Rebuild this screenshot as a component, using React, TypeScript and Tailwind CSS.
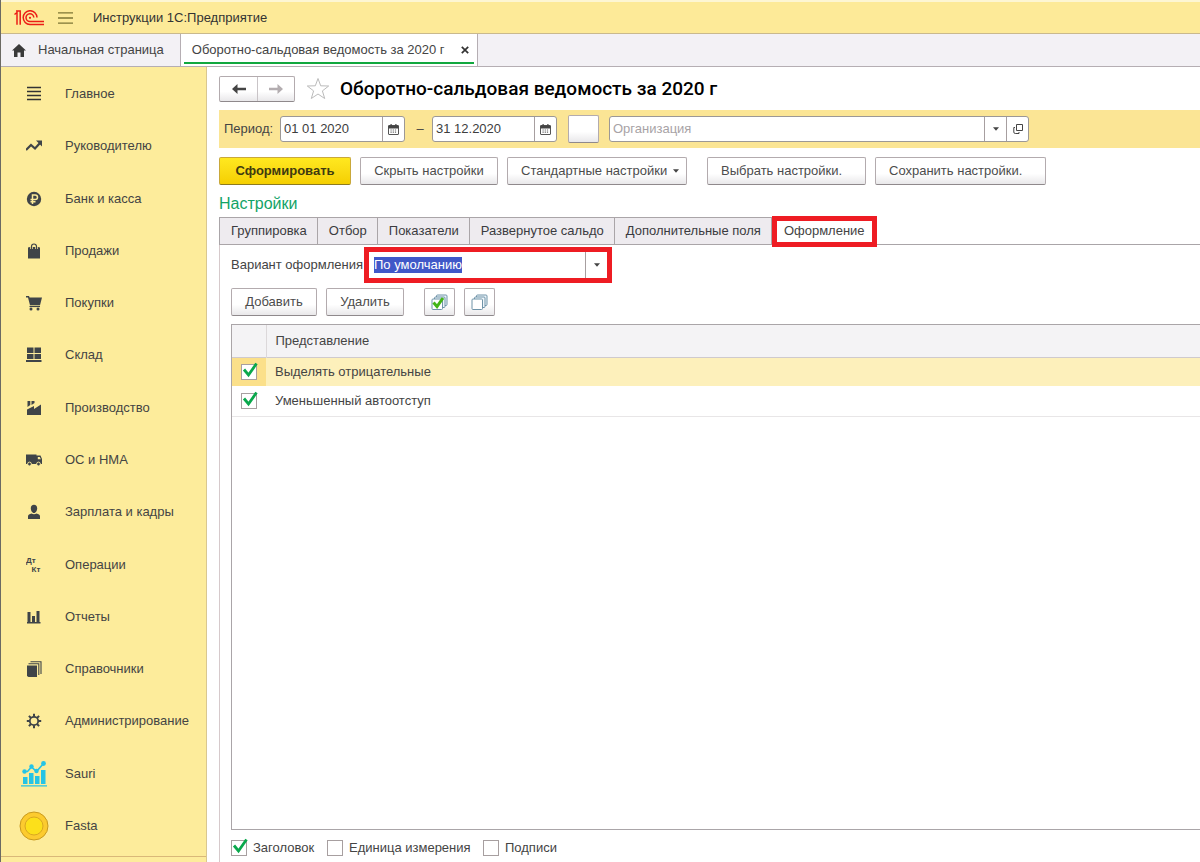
import { useEffect, useRef, type ReactNode } from "react";

const ink = "#3f4448";

const menu: { label: string; icon: ReactNode }[] = [
  {
    label: "Главное",
    icon: <path d="M1 1.5h14M1 5.5h14M1 9.5h14M1 13.5h14" stroke="#333" strokeWidth="1.6" fill="none" />,
  },
  {
    label: "Руководителю",
    icon: (
      <>
        <path d="M0 12l5-5 4 3.5 5-5.5" stroke={ink} strokeWidth="2.2" fill="none" />
        <path d="M10 2.500h6v6z" fill={ink} />
      </>
    ),
  },
  {
    label: "Банк и касса",
    icon: (
      <>
        <circle cx="8" cy="8" r="7.2" fill={ink} />
        <path d="M6.5 13V4h2.7a2.2 2.2 0 010 4.6H4.5M4.5 10.8h5" stroke="#fdec9b" strokeWidth="1.5" fill="none" />
      </>
    ),
  },
  {
    label: "Продажи",
    icon: (
      <>
        <path d="M2 4.500l2-.5h8l2 .5v11H2z" fill={ink} />
        <path d="M5.500 6V3.500a2.500 2.500 0 015 0V6" stroke="#fdec9b" strokeWidth="2.6" fill="none" />
        <path d="M5.500 6.500v-3a2.500 2.500 0 015 0v3" stroke={ink} strokeWidth="1.2" fill="none" />
      </>
    ),
  },
  {
    label: "Покупки",
    icon: (
      <>
        <path d="M0 1h3l.6 1.500H16l-2 7.800H4L2 2.500H0z" fill={ink} />
        <path d="M3.5 11.500H14" stroke={ink} strokeWidth="1.2" />
        <circle cx="5" cy="14" r="1.5" fill={ink} />
        <circle cx="12" cy="14" r="1.5" fill={ink} />
      </>
    ),
  },
  {
    label: "Склад",
    icon: <path d="M1 .5h6.5V6H1zM8.500 .5H15V6H8.500zM1 7h6.500v5H1zM8.500 7H15v5H8.500zM0 13h15.500v2H0z" fill={ink} />,
  },
  {
    label: "Производство",
    icon: <path d="M1 15V9.500L8 6v3l7-4.500V15zM1.500 1h2.800v4L1.500 7zM5.500 1h3v2l-3 2z" fill={ink} />,
  },
  {
    label: "ОС и НМА",
    icon: (
      <>
        <path d="M0 2.500h10.500V12H0zM10 3.500h4.500L16 7v5h-6z" fill={ink} />
        <path d="M11.800 5h2l1 2.200h-3z" fill="#fdec9b" />
        <circle cx="3.5" cy="12" r="1.900" fill={ink} stroke="#fdec9b" strokeWidth=".9" />
        <circle cx="12.500" cy="12" r="1.900" fill={ink} stroke="#fdec9b" strokeWidth=".9" />
      </>
    ),
  },
  {
    label: "Зарплата и кадры",
    icon: (
      <path
        d="M8 .8c2 0 3.200 1.400 3.200 3.400S9.900 9 8 9 4.800 6.200 4.800 4.200 6 .8 8 .8zM2 15v-2.800C2 10.500 3.500 10 5.500 9.500c1.500 1 3.500 1 5 0 2 .5 3.500 1 3.500 2.700V15z"
        fill={ink}
      />
    ),
  },
  {
    label: "Операции",
    icon: (
      <g fill={ink} fontFamily="Liberation Sans, sans-serif" fontWeight="bold" fontSize="8">
        <text x="0" y="6">Дт</text>
        <text x="5.500" y="15">Кт</text>
      </g>
    ),
  },
  {
    label: "Отчеты",
    icon: <path d="M1.500 3h3v10h-3zM6 7h3v6H6zM10.500 2h3v11h-3zM1 13h13.500v1.500H1z" fill={ink} />,
  },
  {
    label: "Справочники",
    icon: (
      <>
        <path d="M1 4.500h10V16H2.500L1 15z" fill={ink} />
        <path d="M2.500 2.800h10.300V14M4.500 .8H15V13" stroke={ink} strokeWidth="1.1" fill="none" />
      </>
    ),
  },
  {
    label: "Администрирование",
    icon: (
      <>
        <circle cx="8" cy="8" r="4.2" stroke={ink} strokeWidth="1.8" fill="none" />
        <path
          d="M8 .8v3M8 12.200v3M.8 8h3M12.200 8h3M2.900 2.900L5 5M11 11l2.100 2.100M2.900 13.100L5 11M11 5l2.100-2.100"
          stroke={ink}
          strokeWidth="2"
        />
      </>
    ),
  },
];

const plainButton =
  "h-7 rounded-xs border border-[#b3abae] border-b-[#8f898c] bg-linear-to-b from-white from-60% to-[#e9e8ea] text-center text-[#4c4c4c] whitespace-nowrap";
const fieldBox = "flex h-[26px] rounded-[3px] border border-[#9c9896] bg-white";
const textInput = "min-w-0 px-[3px] text-[#3d3d3d] outline-none placeholder:text-[#a8a3a6]";

function Logo() {
  return (
    <svg viewBox="0 0 30 16" className="h-4 w-[30px]" fill="none" stroke="#ec1c16" strokeWidth="1.5" aria-label="1С">
      <path d="M.5 4.500L3 2.500v12.300M2 1h4.200v13.800" />
      <path d="M23 7.500A6.900 6.900 0 1016 14.500h14" />
      <path d="M19.800 7.500A3.900 3.900 0 1016 11.600h14" />
      <circle cx="16" cy="7.800" r="1.100" fill="#ec1c16" stroke="none" />
    </svg>
  );
}

function Caret() {
  return (
    <svg viewBox="0 0 6 4" className="h-1 w-1.5" aria-hidden="true">
      <path d="M0 .3h6L3 3.700z" fill="#444" />
    </svg>
  );
}

function CalendarIcon() {
  return (
    <svg viewBox="0 0 11 11" className="size-[11px]" aria-hidden="true">
      <path d="M1 1.500h9q.5 0 .5.500v8q0 .5-.5.500H1q-.5 0-.5-.5V2q0-.5.500-.5z" fill="#fff" stroke="#555" />
      <path d="M.5 1.500h10v3H.5zM2.500 0h1.200v2H2.500zM7.300 0h1.200v2H7.300z" fill="#444" />
      <path d="M2.500 6h6.500M2.500 8.200h6.500" stroke="#666" strokeWidth="1.2" strokeDasharray="1.2 1" />
    </svg>
  );
}

function Arrow({ color, flip }: { color: string; flip?: boolean }) {
  return (
    <svg viewBox="0 0 14 10" className={flip ? "h-2.5 w-3.5 -scale-x-100" : "h-2.5 w-3.5"} aria-hidden="true">
      <path d="M0 5l5.500-5v3.700H14v2.600H5.500V10z" fill={color} />
    </svg>
  );
}

function Stack({ checked }: { checked?: boolean }) {
  return (
    <svg viewBox="0 0 17 17" className="size-[17px]" aria-hidden="true">
      <g fill="#eef5fa" stroke="#6f93a8">
        <rect x="5.5" y="1" width="10.5" height="10.5" rx="1" />
        <rect x="3.5" y="3" width="10.5" height="10.5" rx="1" />
        <rect x="1" y="5" width="10.5" height="10.5" rx="1" fill="#fff" />
      </g>
      {checked && <path d="M2.500 8.500l3.500 4L12 4" fill="none" stroke="#43b516" strokeWidth="3" />}
    </svg>
  );
}

function Check({ id, label, on }: { id: string; label?: string; on?: boolean }) {
  return (
    <span className="inline-grid size-4 shrink-0 align-middle">
      <input
        id={id}
        type="checkbox"
        defaultChecked={on}
        aria-label={label}
        className="peer col-start-1 row-start-1 size-4 appearance-none border border-[#a79fa0] bg-white"
      />
      <svg
        viewBox="0 0 16 16"
        className="pointer-events-none invisible col-start-1 row-start-1 size-4 overflow-visible peer-checked:visible"
        aria-hidden="true"
      >
        <path d="M3 5.500L7.500 11l8-11.500" fill="none" stroke="#0aa84c" strokeWidth="2.8" />
      </svg>
    </span>
  );
}

function DateField({ label, value }: { label: string; value: string }) {
  return (
    <div className={fieldBox}>
      <input type="text" aria-label={label} defaultValue={value} className={`${textInput} w-[101px]`} />
      <button type="button" aria-label="Выбрать дату" className="flex w-[22px] items-center justify-center border-l border-[#a79fa0]">
        <CalendarIcon />
      </button>
    </div>
  );
}

const tabs = ["Группировка", "Отбор", "Показатели", "Развернутое сальдо", "Дополнительные поля"];

export default function App() {
  const variant = useRef<HTMLInputElement>(null);

  useEffect(() => {
    variant.current?.focus();
    variant.current?.select();
  }, []);

  return (
    <div className="flex min-h-screen flex-col overflow-hidden border-l border-[#6b6a63] bg-white font-['Liberation_Sans',sans-serif] text-[13px] leading-4 text-[#444]">
      <header className="flex h-[34px] items-center border-t-2 border-b border-t-[#fdf6d3] border-b-[#c9b98d] bg-[#fdea98] pl-[13px] text-[#333]">
        <Logo />
        <button type="button" aria-label="Меню" className="ml-3.5">
          <svg viewBox="0 0 15 12" className="h-3 w-[15px]" aria-hidden="true">
            <path d="M0 .8h15M0 6h15M0 11.200h15" stroke="#7d7535" strokeWidth="1.3" />
          </svg>
        </button>
        <h2 className="ml-5">Инструкции 1С:Предприятие</h2>
      </header>

      <nav className="flex h-[33px] border-b border-[#b5aeb3] bg-[#f3f1f5]" aria-label="Вкладки">
        <a href="#home" className="flex items-center gap-3 border-r border-[#b5aeb3] pr-4 pl-[11px]">
          <svg viewBox="0 0 14 13" className="h-[13px] w-3.5" aria-hidden="true">
            <path d="M7 0l7 6.500h-2V13H8.500V8.500h-3V13H2V6.500H0z" fill="#3a3a3a" />
          </svg>
          Начальная страница
        </a>
        <div className="flex border-r border-[#b5aeb3] bg-white px-[3px]">
          <div className="mb-0.5 flex items-center border-b-2 border-[#12a83f] pt-1 pl-2">
            <a href="#osv">Оборотно-сальдовая ведомость за 2020 г</a>
            <button type="button" aria-label="Закрыть" className="pr-[5px] pl-4">
              <svg viewBox="0 0 8 8" className="size-2" aria-hidden="true">
                <path d="M.8.8l6.400 6.400M7.200.8L.8 7.200" stroke="#333" strokeWidth="1.7" />
              </svg>
            </button>
          </div>
        </div>
      </nav>

      <div className="flex flex-1">
        <aside className="flex w-[206px] shrink-0 flex-col border-r border-[#d9c790] bg-[#fdec9b]">
          <nav className="flex flex-1 flex-col pt-px pb-1" aria-label="Разделы">
            {menu.map(({ label, icon }) => (
              <a key={label} href="#section" className="flex flex-1 items-center pl-[25px]">
                <svg viewBox="0 0 16 16" className="mr-[23px] size-4 shrink-0" aria-hidden="true">
                  {icon}
                </svg>
                {label}
              </a>
            ))}
            <a href="#sauri" className="flex flex-1 items-center pl-5">
              <svg viewBox="0 0 26 26" className="mr-[18px] size-[26px] shrink-0" aria-hidden="true">
                <path d="M2 16h4.500v7H2zM8 12h4.500v11H8zM14 15h4.500v8H14zM20 9h4.500v14H20zM0 24.200h26v1.300H0z" fill="#25c4e6" />
                <path d="M4 10.500h2.500l4-4.500 5 4.500 7-8" fill="none" stroke="#25c4e6" strokeWidth="1.6" />
                <g fill="#25c4e6">
                  <circle cx="3.5" cy="10.500" r="2.200" />
                  <circle cx="10.500" cy="5.500" r="2.200" />
                  <circle cx="15.500" cy="10" r="2.200" />
                  <circle cx="22.500" cy="2.500" r="2.400" />
                </g>
              </svg>
              Sauri
            </a>
            <a href="#fasta" className="flex flex-1 items-center pl-[18px]">
              <svg viewBox="0 0 30 30" className="mr-4 size-[30px] shrink-0" aria-hidden="true">
                <circle cx="15" cy="15" r="14" fill="#fccb2f" stroke="#c99a1e" />
                <circle cx="15" cy="15" r="9" fill="#fce01b" stroke="#d9a821" />
              </svg>
              Fasta
            </a>
          </nav>
          <div className="h-1.5 border-t border-[#d9b878]" />
        </aside>

        <main className="flex min-w-0 flex-1 flex-col pl-3">
          <div className="flex h-[43px] items-center">
            <div className="flex h-[26px] rounded-xs border border-[#b3abae] border-b-[#8f898c] bg-linear-to-b from-white from-60% to-[#e9e8ea]">
              <button type="button" aria-label="Назад" className="flex w-[38px] items-center justify-center border-r border-[#c9c4c7]">
                <Arrow color="#444" />
              </button>
              <button type="button" aria-label="Вперед" className="flex w-9 items-center justify-center">
                <Arrow color="#b3adb0" flip />
              </button>
            </div>
            <button type="button" aria-label="В избранное" className="ml-[11px]">
              <svg viewBox="0 0 24 23" className="h-[23px] w-6" aria-hidden="true">
                <path
                  d="M12 1.500l2.700 7.300 8 .2-6.300 4.900 2.300 7.600L12 17l-6.700 4.500 2.300-7.600L1.300 9l8-.2z"
                  fill="#fff"
                  stroke="#bbb"
                />
              </svg>
            </button>
            <h1 className="ml-2.5 font-['Roboto',sans-serif] text-[19px] leading-6 font-medium text-black">
              Оборотно-сальдовая ведомость за 2020 г
            </h1>
          </div>

          <div className="flex h-[38px] items-center bg-[#fbe595] pl-[5px]">
            <span className="w-14">Период:</span>
            <DateField label="Начало периода" value="01 01 2020" />
            <span className="w-[27px] pl-[3px] text-center">–</span>
            <DateField label="Конец периода" value="31 12.2020" />
            <button type="button" aria-label="Период" className={`${plainButton} ml-[11px] w-[31px]`} />
            <div className={`${fieldBox} ml-2.5 w-[420px]`}>
              <input type="text" aria-label="Организация" placeholder="Организация" className={`${textInput} flex-1`} />
              <button type="button" aria-label="Список" className="flex w-[22px] items-center justify-center border-l border-[#a79fa0]">
                <Caret />
              </button>
              <button type="button" aria-label="Открыть" className="flex w-[22px] items-center justify-center border-l border-[#a79fa0]">
                <svg viewBox="0 0 10 10" className="size-2.5" fill="none" stroke="#444" aria-hidden="true">
                  <path d="M3.500.5h6v6h-6zM2 3.500H.8V8q0 1.500 1.500 1.500H6V8" />
                </svg>
              </button>
            </div>
          </div>

          <div className="mt-[9px] flex">
            <button
              type="button"
              className="h-7 w-[132px] rounded-xs border border-[#c9a83a] border-b-[#8e7b1e] bg-linear-to-b from-[#ffe81f] to-[#f5cf00] font-bold text-[#3f3a10]"
            >
              Сформировать
            </button>
            <button type="button" className={`${plainButton} ml-[9px] w-[138px]`}>
              Скрыть настройки
            </button>
            <button type="button" className={`${plainButton} ml-[9px] flex w-[180px] items-center gap-1.5 pl-[13px]`}>
              Стандартные настройки
              <Caret />
            </button>
            <button type="button" className={`${plainButton} ml-5 flex w-[159px] items-center pl-[13px]`}>
              Выбрать настройки.
            </button>
            <button type="button" className={`${plainButton} ml-[9px] flex w-[171px] items-center pl-[13px]`}>
              Сохранить настройки.
            </button>
          </div>

          <h2 className="mt-[7px] mb-px text-[16px] leading-6 text-[#12a366]">Настройки</h2>

          <div className="flex h-7 border-b border-[#aaa5a8]" role="tablist">
            {tabs.map((tab) => (
              <button
                key={tab}
                type="button"
                role="tab"
                aria-selected="false"
                className="border-t border-r border-[#aaa5a8] bg-[#eeebef] pr-2.5 pl-[11px] whitespace-nowrap text-[#3b3b40] first:border-l"
              >
                {tab}
              </button>
            ))}
            <button type="button" role="tab" aria-selected="true" className="relative bg-white px-3 whitespace-nowrap">
              Оформление
              <span className="absolute -top-px right-0 -bottom-[3px] left-0 border-[5px] border-[#ee1c23]" />
            </button>
          </div>

          <div className="flex flex-1 flex-col border-l border-[#d6c9cb] pl-[11px]">
            <div className="mt-0.5 flex items-center">
              <label htmlFor="variant" className="w-[133px] whitespace-nowrap">
                Вариант оформления
              </label>
              <div className="flex h-9 w-[248px] items-stretch border-[5px] border-[#ee1c23] bg-white">
                <input
                  id="variant"
                  ref={variant}
                  type="text"
                  defaultValue="По умолчанию"
                  className="min-w-0 flex-1 pl-[5px] outline-none selection:bg-[#4058c8] selection:text-white"
                />
                <button type="button" aria-label="Список вариантов" className="flex w-[22px] items-center justify-center border-l border-[#a79fa0]">
                  <Caret />
                </button>
              </div>
            </div>

            <div className="mt-[5px] flex">
              <button type="button" className={`${plainButton} w-[86px]`}>
                Добавить
              </button>
              <button type="button" className={`${plainButton} ml-[9px] w-[78px]`}>
                Удалить
              </button>
              <button type="button" aria-label="Отметить все" className={`${plainButton} ml-5 flex w-[31px] items-center justify-center`}>
                <Stack checked />
              </button>
              <button type="button" aria-label="Снять отметки" className={`${plainButton} ml-[9px] flex w-[31px] items-center justify-center`}>
                <Stack />
              </button>
            </div>

            <div className="mt-2 flex-1 border border-r-0 border-[#aaa5a8]">
              <table className="w-full border-collapse text-left">
                <thead>
                  <tr className="h-8 border-b border-[#cfcacd] bg-[#f4f3f5]">
                    <th className="w-[34px] border-r border-[#dcd8da]" aria-label="Использование" />
                    <th className="pl-[9px] font-normal">Представление</th>
                  </tr>
                </thead>
                <tbody>
                  <tr className="h-[29px] bg-[#fdf0bb]">
                    <td className="bg-[#fbe08a] pl-[9px]">
                      <Check id="negative" label="Выделять отрицательные" on />
                    </td>
                    <td className="pl-[9px]">Выделять отрицательные</td>
                  </tr>
                  <tr className="h-[30px] border-b border-[#e8e6e7]">
                    <td className="pl-[9px]">
                      <Check id="indent" label="Уменьшенный автоотступ" on />
                    </td>
                    <td className="pl-[9px]">Уменьшенный автоотступ</td>
                  </tr>
                </tbody>
              </table>
            </div>

            <div className="flex h-8 items-center pt-1">
              <Check id="title" on />
              <label htmlFor="title" className="ml-1.5 w-[74px]">
                Заголовок
              </label>
              <Check id="unit" />
              <label htmlFor="unit" className="ml-1.5 w-[134px]">
                Единица измерения
              </label>
              <Check id="captions" />
              <label htmlFor="captions" className="ml-1.5">
                Подписи
              </label>
            </div>
          </div>
        </main>
      </div>
    </div>
  );
}
